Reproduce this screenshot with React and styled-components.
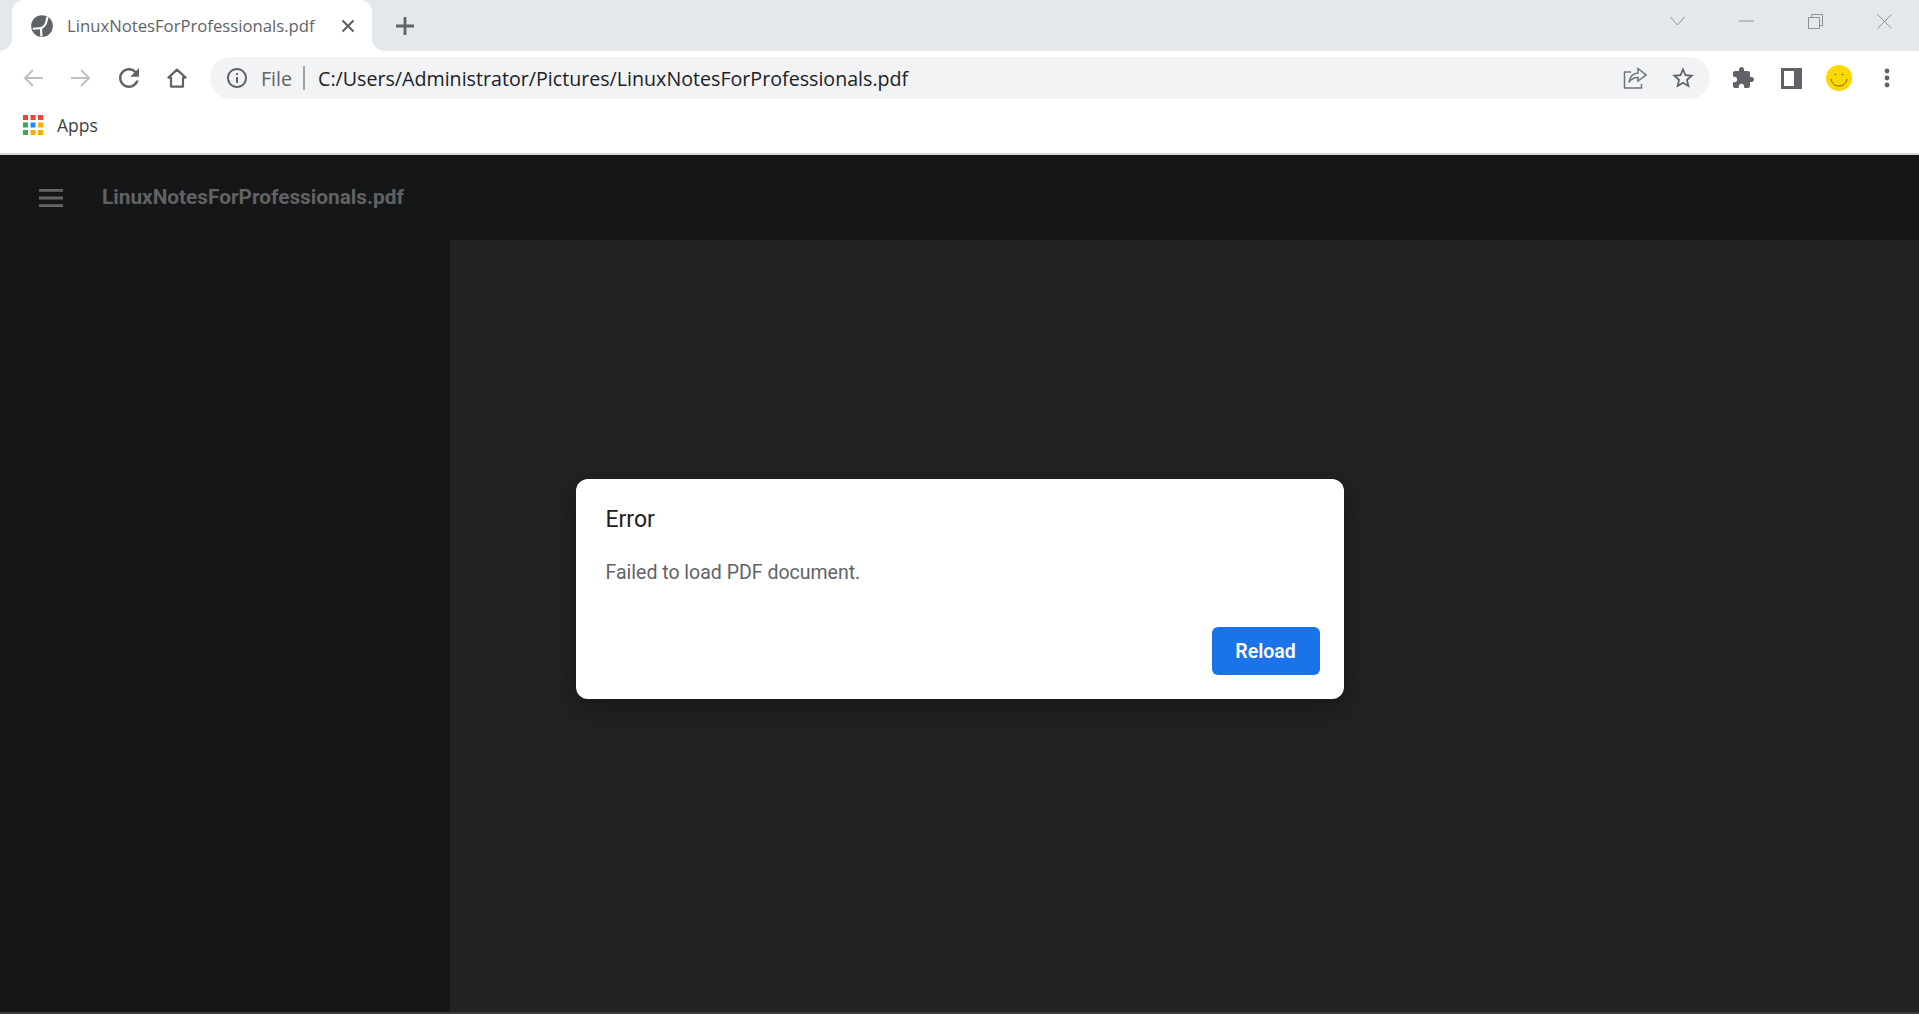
import React from 'react';
import styled, { createGlobalStyle } from 'styled-components';

const GlobalStyle = createGlobalStyle`
  html, body {
    margin: 0;
    height: 100%;
    overflow: hidden;
  }
  #root {
    height: 100%;
  }
`;

const Window = styled.div`
  height: 100vh;
  display: flex;
  flex-direction: column;
  font-family: "Open Sans", "Noto Sans", sans-serif;
`;

const TabStrip = styled.div`
  height: 51px;
  flex: none;
  background: #e5e8eb;
  display: flex;
  align-items: flex-start;
  padding-left: 12px;
`;

const Tab = styled.div`
  width: 360px;
  height: 51px;
  background: #fff;
  border-radius: 12px 12px 0 0;
  display: flex;
  align-items: center;
  padding: 0 17px 0 17px;
  box-sizing: border-box;
  position: relative;

  &::before, &::after {
    content: '';
    position: absolute;
    bottom: 0;
    width: 12px;
    height: 12px;
  }
  &::before {
    left: -12px;
    background: radial-gradient(circle at 0 0, transparent 11.5px, #fff 12px);
  }
  &::after {
    right: -12px;
    background: radial-gradient(circle at 100% 0, transparent 11.5px, #fff 12px);
  }
`;

const TabTitle = styled.span`
  flex: 1;
  margin-left: 12px;
  font-size: 16.7px;
  color: #5f6368;
  white-space: nowrap;
`;

const NewTab = styled.div`
  margin-left: 23px;
  height: 51px;
  display: flex;
  align-items: center;
`;

const WindowControls = styled.div`
  margin-left: auto;
  height: 42px;
  display: flex;
  align-items: center;
  padding-right: 27px;
  gap: 54px;
`;

const Toolbar = styled.div`
  height: 52px;
  flex: none;
  background: #fff;
  display: flex;
  align-items: center;
  padding: 2px 0 0 9px;
  box-sizing: border-box;
`;

const IconGroup = styled.div`
  display: flex;
  align-items: center;
  flex: none;
`;

const IconSlot = styled.div`
  width: 48px;
  height: 32px;
  flex: none;
  display: flex;
  align-items: center;
  justify-content: center;
`;

const Omnibox = styled.div`
  width: 1500px;
  height: 42px;
  margin: 0 9px;
  flex: none;
  background: #f1f3f4;
  border-radius: 21px;
  display: flex;
  align-items: center;
  padding: 0 3px 0 15px;
  box-sizing: border-box;
`;

const Scheme = styled.span`
  margin-left: 12px;
  font-size: 19.6px;
  color: #5f6368;
`;

const Divider = styled.span`
  width: 2px;
  height: 24px;
  background: #9aa0a6;
  margin: 0 13px 0 11px;
`;

const Url = styled.span`
  flex: 1;
  font-size: 19.65px;
  color: #202124;
  white-space: nowrap;
`;

const Bookmarks = styled.div`
  height: 50px;
  flex: none;
  background: #fff;
  display: flex;
  align-items: center;
  box-sizing: border-box;
  padding: 0 0 6px 23px;
  gap: 14px;
  font-size: 17.5px;
  color: #3c4043;
`;

const Viewer = styled.div`
  flex: 1;
  min-height: 0;
  border-top: 2px solid #d8d8d8;
  border-bottom: 2px solid #3a3b3c;
  background: #212224;
  display: flex;
  flex-direction: column;
  position: relative;
  font-family: Roboto, sans-serif;
`;

const PdfBar = styled.div`
  height: 85px;
  flex: none;
  background: #151618;
  display: flex;
  align-items: center;
  padding-left: 39px;
  gap: 39px;
`;

const PdfTitle = styled.span`
  font-size: 20.8px;
  font-weight: 700;
  color: #626262;
  margin-bottom: 2px;
`;

const PdfBody = styled.div`
  flex: 1;
  display: flex;
`;

const Sidebar = styled.div`
  width: 450px;
  background: #151618;
`;

const Overlay = styled.div`
  position: absolute;
  inset: 0;
  display: flex;
  align-items: center;
  justify-content: center;
  padding-top: 11px;
`;

const Dialog = styled.div`
  width: 768px;
  height: 220px;
  box-sizing: border-box;
  background: #fff;
  border-radius: 12px;
  padding: 27px 24px 24px 30px;
  display: flex;
  flex-direction: column;
  box-shadow: 0 8px 28px rgba(0, 0, 0, 0.35);
`;

const DialogTitle = styled.div`
  font-size: 23px;
  line-height: 28px;
  color: #202124;
`;

const DialogText = styled.div`
  margin-top: 25px;
  font-size: 19.5px;
  line-height: 28px;
  color: #5f6368;
`;

const DialogActions = styled.div`
  margin-top: auto;
  display: flex;
  justify-content: flex-end;
`;

const ReloadButton = styled.button`
  width: 108px;
  height: 48px;
  border: none;
  border-radius: 6px;
  background: #1a73e8;
  color: #fff;
  font-family: Roboto, sans-serif;
  font-size: 19.5px;
  font-weight: 600;
`;

const Icon = ({ size = 24, fill = '#5f6368', children }) => (
  <svg width={size} height={size} viewBox="0 0 24 24" fill={fill}>{children}</svg>
);

const AppsGrid = () => (
  <svg width="20" height="20" viewBox="0 0 20 20">
    {[['#f44336', '#f44336', '#f44336'], ['#34a853', '#1a8cff', '#fbab04'], ['#34a853', '#fbab04', '#fbab04']].map((row, r) =>
      row.map((c, i) => <rect key={`${r}${i}`} x={i * 7.5} y={r * 7.5} width="5" height="5" fill={c} />)
    )}
  </svg>
);

const App = () => (
  <Window>
    <GlobalStyle />
    <TabStrip>
      <Tab>
        <Icon size={26}>
          <circle cx="12" cy="12" r="10" />
          <path d="M17 3.5c-1 3 0 6-3 8.500s-3 2-10.500 2.500M11.500 14c-1 2 0 5 0 7.500" fill="none" stroke="#fff" strokeWidth="2" />
        </Icon>
        <TabTitle>LinuxNotesForProfessionals.pdf</TabTitle>
        <svg width="14" height="14" viewBox="0 0 14 14" stroke="#5f6368" strokeWidth="2.2"><path d="M1.5 1.5l11 11M12.5 1.5l-11 11" /></svg>
      </Tab>
      <NewTab>
        <svg width="20" height="20" viewBox="0 0 20 20" stroke="#5f6368" strokeWidth="2.8"><path d="M10 1v18M1 10h18" /></svg>
      </NewTab>
      <WindowControls>
        <svg width="15" height="10" viewBox="0 0 15 10" fill="none" stroke="#8e9194"><path d="M.5 1l7 8 7-8" /></svg>
        <svg width="15" height="2" viewBox="0 0 15 2" stroke="#8e9194"><path d="M0 1h15" /></svg>
        <svg width="15" height="15" viewBox="0 0 15 15" fill="none" stroke="#8e9194"><path d="M.5 3.5h11v11H.5zM3.5 3.5V.5h11v11h-3" /></svg>
        <svg width="15" height="15" viewBox="0 0 15 15" stroke="#8e9194"><path d="M.5.5l14 14M14.5.5l-14 14" /></svg>
      </WindowControls>
    </TabStrip>
    <Toolbar>
      <IconGroup>
        <IconSlot>
          <svg width="20" height="20" viewBox="0 0 20 20" fill="none" stroke="#bdc1c6" strokeWidth="2"><path d="M20 10H2M10 2l-8 8 8 8" /></svg>
        </IconSlot>
        <IconSlot>
          <svg width="20" height="20" viewBox="0 0 20 20" fill="none" stroke="#bdc1c6" strokeWidth="2"><path d="M0 10h18M10 2l8 8-8 8" /></svg>
        </IconSlot>
        <IconSlot>
          <Icon size={30}><path d="M17.65 6.35C16.2 4.9 14.21 4 12 4c-4.42 0-7.99 3.58-7.99 8s3.57 8 7.99 8c3.73 0 6.84-2.55 7.73-6h-2.08c-.82 2.33-3.04 4-5.65 4-3.31 0-6-2.69-6-6s2.69-6 6-6c1.66 0 3.14.69 4.22 1.78L13 11h7V4l-2.35 2.35z" /></Icon>
        </IconSlot>
        <IconSlot>
          <svg width="20" height="20" viewBox="0 0 20 20" fill="none" stroke="#5f6368" strokeWidth="2.2" strokeLinejoin="round"><path d="M10 1.6L18.6 9.6H16V18.6H4V9.6H1.4z" /></svg>
        </IconSlot>
      </IconGroup>
      <Omnibox>
        <Icon><path d="M11 7h2v2h-2zm0 4h2v6h-2zm1-9C6.48 2 2 6.48 2 12s4.48 10 10 10 10-4.48 10-10S17.52 2 12 2zm0 18c-4.41 0-8-3.59-8-8s3.59-8 8-8 8 3.59 8 8-3.59 8-8 8z" /></Icon>
        <Scheme>File</Scheme>
        <Divider />
        <Url>C:/Users/Administrator/Pictures/LinuxNotesForProfessionals.pdf</Url>
        <IconSlot>
          <svg width="24" height="24" viewBox="0 0 24 24" fill="none" stroke="#70757a" strokeWidth="1.5"><path d="M8 6H1.5v16h17v-4" /><path d="M15 2.5l8 6.5-8 6v-3.5c-4 0-7 1.5-9 5 .5-5 3.5-9 9-9.5z" /></svg>
        </IconSlot>
        <IconSlot>
          <Icon size={26}><path d="M22 9.24l-7.19-.62L12 2 9.19 8.63 2 9.24l5.46 4.73L5.82 21 12 17.27 18.18 21l-1.63-7.03L22 9.24zM12 15.4l-3.76 2.27 1-4.28-3.32-2.88 4.38-.38L12 6.1l1.71 4.04 4.38.38-3.32 2.88 1 4.28L12 15.4z" /></Icon>
        </IconSlot>
      </Omnibox>
      <IconGroup>
        <IconSlot>
          <Icon><path d="M20.5 11H19V7c0-1.1-.9-2-2-2h-4V3.5C13 2.12 11.88 1 10.5 1S8 2.12 8 3.5V5H4c-1.1 0-1.99.9-1.99 2v3.8H3.5c1.49 0 2.7 1.21 2.7 2.7s-1.21 2.7-2.7 2.7H2V20c0 1.1.9 2 2 2h3.8v-1.5c0-1.49 1.21-2.7 2.7-2.7 1.49 0 2.7 1.21 2.7 2.7V22H17c1.1 0 2-.9 2-2v-4h1.5c1.38 0 2.5-1.12 2.5-2.5S21.88 11 20.5 11z" /></Icon>
        </IconSlot>
        <IconSlot>
          <svg width="21" height="21" viewBox="0 0 21 21" fill="#5f6368"><path fillRule="evenodd" d="M0 0h21v21H0zM3 3v15h10V3z" /></svg>
        </IconSlot>
        <IconSlot>
          <svg width="26" height="26" viewBox="0 0 26 26">
            <circle cx="13" cy="13" r="13" fill="#fdd800" />
            <circle cx="9.5" cy="9.5" r="0.8" fill="#6b6300" />
            <circle cx="16.5" cy="9.5" r="0.8" fill="#6b6300" />
            <path d="M5 14c1 5 4 7 8 7s7-2 8-7" fill="none" stroke="#6b6300" strokeWidth="1" />
          </svg>
        </IconSlot>
        <IconSlot>
          <Icon><circle cx="12" cy="5" r="2.4" /><circle cx="12" cy="12" r="2.4" /><circle cx="12" cy="19" r="2.4" /></Icon>
        </IconSlot>
      </IconGroup>
    </Toolbar>
    <Bookmarks>
      <AppsGrid />
      Apps
    </Bookmarks>
    <Viewer>
      <PdfBar>
        <svg width="24" height="18" viewBox="0 0 24 18" fill="#666"><path d="M0 0h24v2.8H0zM0 7.6h24v2.8H0zM0 15.2h24V18H0z" /></svg>
        <PdfTitle>LinuxNotesForProfessionals.pdf</PdfTitle>
      </PdfBar>
      <PdfBody>
        <Sidebar />
      </PdfBody>
      <Overlay>
        <Dialog>
          <DialogTitle>Error</DialogTitle>
          <DialogText>Failed to load PDF document.</DialogText>
          <DialogActions>
            <ReloadButton>Reload</ReloadButton>
          </DialogActions>
        </Dialog>
      </Overlay>
    </Viewer>
  </Window>
);

export default App;
